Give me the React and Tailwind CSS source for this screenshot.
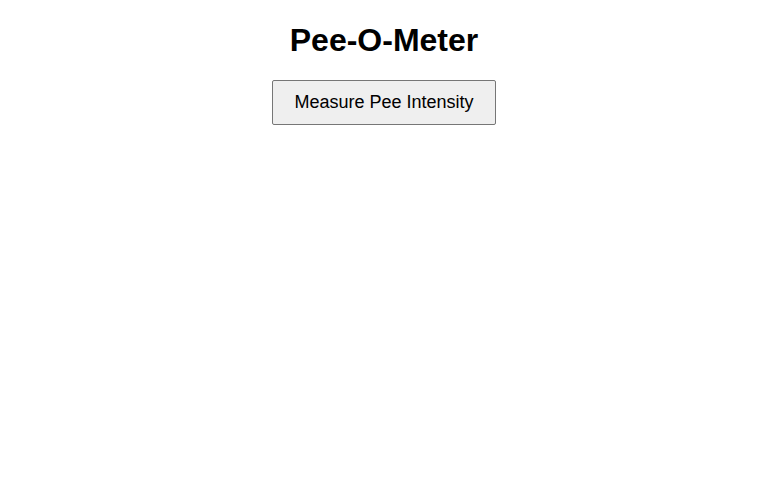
import React from 'react';

const App = () => {
  return (
    <div className="min-h-screen bg-white text-center font-['Liberation_Sans',Arial,sans-serif] text-black">
      <h1 className="pt-[22px] text-[32px] font-bold leading-[37px]">Pee-O-Meter</h1>
      <button
        type="button"
        className="mt-[21px] rounded-[2px] border border-[#767676] bg-[#efefef] px-[21px] py-[11px] text-[18px] leading-[21px] text-black"
      >
        Measure Pee Intensity
      </button>
    </div>
  );
};

export default App;
